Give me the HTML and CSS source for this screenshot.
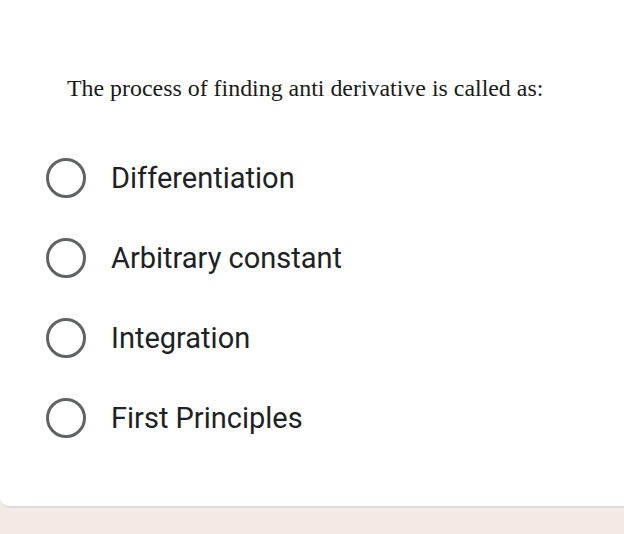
FILE: index.html
```html
<!DOCTYPE html>
<html>
<head>
<meta charset="utf-8">
<link rel="stylesheet" href="styles.css">
</head>
<body>
<div class="card">
  <div class="question">The process of finding anti derivative is called as:</div>
  <div class="options">
    <label class="option"><span class="radio"></span><span class="label">Differentiation</span></label>
    <label class="option"><span class="radio"></span><span class="label">Arbitrary constant</span></label>
    <label class="option"><span class="radio"></span><span class="label">Integration</span></label>
    <label class="option"><span class="radio"></span><span class="label">First Principles</span></label>
  </div>
</div>
</body>
</html>
```
FILE: styles.css
```css
html, body {
  margin: 0;
  padding: 0;
}
body {
  background: #f4e9e5;
  height: 534px;
  overflow: hidden;
}
.card {
  background: #fff;
  height: 508px;
  margin-right: -20px;
  border-radius: 0 0 10px 10px;
  border-bottom: 2px solid #dadce0;
  box-sizing: border-box;
  padding-top: 72px;
}
.question {
  font-family: "Liberation Serif", "Times New Roman", serif;
  font-size: 23.9px;
  color: #1a1a1a;
  padding-left: 67px;
  line-height: 32px;
}
.options {
  display: flex;
  flex-direction: column;
  padding-top: 54px;
  padding-left: 46px;
  gap: 40px;
}
.option {
  display: flex;
  align-items: center;
  height: 40px;
}
.radio {
  width: 40px;
  height: 40px;
  box-sizing: border-box;
  border: 3.5px solid #5f6368;
  border-radius: 50%;
  flex: none;
}
.label {
  font-family: Roboto, "Liberation Sans", sans-serif;
  font-size: 29px;
  color: #202124;
  margin-left: 25px;
}
```
